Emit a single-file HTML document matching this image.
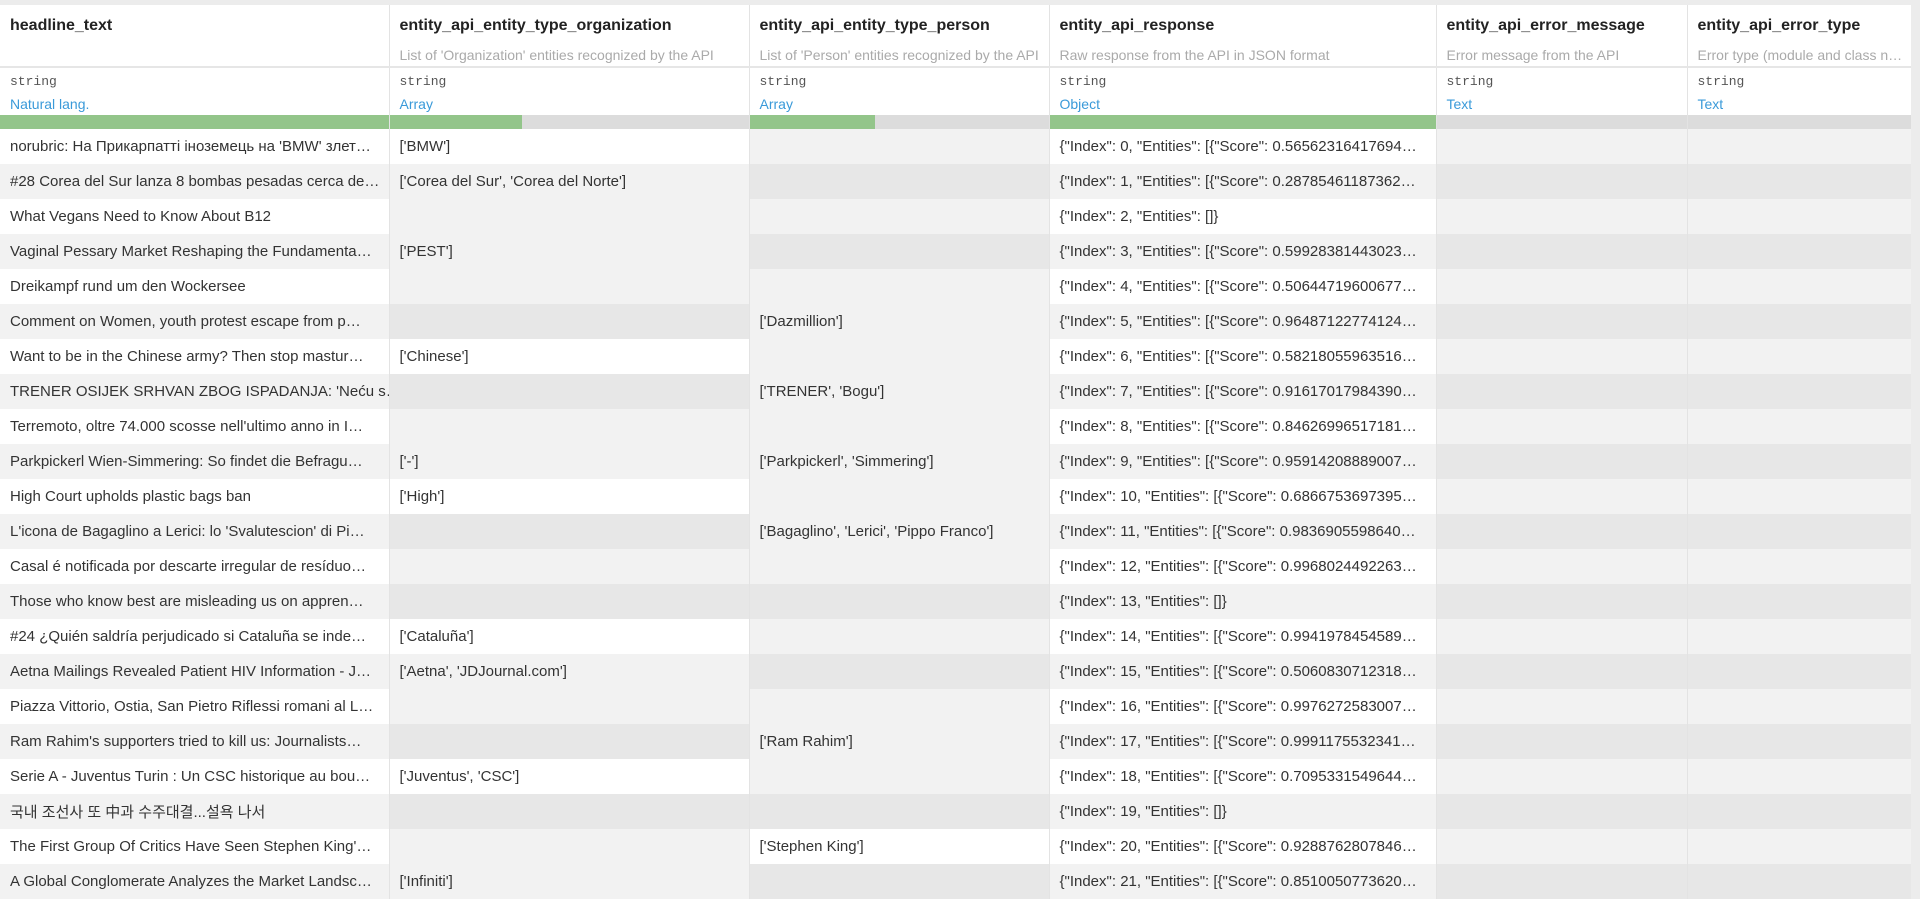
<!DOCTYPE html>
<html><head><meta charset="utf-8"><style>
*{box-sizing:border-box;margin:0;padding:0}
body{width:1920px;height:898px;overflow:hidden;background:#ececec;font-family:"Liberation Sans","Noto Sans CJK KR",sans-serif;color:#333}
table{position:absolute;left:0;top:5px;border-collapse:collapse;table-layout:fixed;width:1911px}
td{overflow:hidden;white-space:nowrap;text-overflow:clip;border-left:1px solid #e3e3e3;padding:0 0 0 10px;font-size:15px;color:#333}
td:first-child{border-left:none}
tr.h td{height:62px;background:#fff;vertical-align:top;border-bottom:2px solid #e6e6e6}
.n{font-weight:bold;font-size:16px;color:#222;margin-top:12px;height:20px}
.d{font-size:14px;color:#aaa;margin-top:10px;overflow:hidden}
tr.t td{height:48px;background:#fff;vertical-align:top}
.s{font-family:"Liberation Mono",monospace;font-size:13px;color:#555;margin-top:6px}
.m{font-size:14px;color:#3a9ad9;margin-top:7px}
tr.b td{height:14px;padding:0;background:#dcdcdc}
.g{height:14px;background:#93c58a}
tr.r td{height:35px}
tr.r:nth-child(even) td{background:#fff}
tr.r:nth-child(even) td.e{background:#f2f2f2}
tr.r:nth-child(odd) td{background:#f2f2f2}
tr.r:nth-child(odd) td.e{background:#e7e7e7}
</style></head><body>
<table>
<colgroup><col style="width:389px"><col style="width:360px"><col style="width:300px"><col style="width:387px"><col style="width:251px"><col style="width:224px"></colgroup>
<tr class="h"><td><div class="n">headline_text</div></td><td><div class="n">entity_api_entity_type_organization</div><div class="d">List of 'Organization' entities recognized by the API</div></td><td><div class="n">entity_api_entity_type_person</div><div class="d">List of 'Person' entities recognized by the API</div></td><td><div class="n">entity_api_response</div><div class="d">Raw response from the API in JSON format</div></td><td><div class="n">entity_api_error_message</div><div class="d">Error message from the API</div></td><td><div class="n">entity_api_error_type</div><div class="d">Error type (module and class n…</div></td></tr>
<tr class="t"><td><div class="s">string</div><div class="m">Natural lang.</div></td><td><div class="s">string</div><div class="m">Array</div></td><td><div class="s">string</div><div class="m">Array</div></td><td><div class="s">string</div><div class="m">Object</div></td><td><div class="s">string</div><div class="m">Text</div></td><td><div class="s">string</div><div class="m">Text</div></td></tr>
<tr class="b"><td><div class="g" style="width:100%"></div></td><td><div class="g" style="width:37%"></div></td><td><div class="g" style="width:42%"></div></td><td><div class="g" style="width:100%"></div></td><td></td><td></td></tr>
<tr class="r"><td>norubric: На Прикарпатті іноземець на 'BMW' злет…</td><td>['BMW']</td><td class="e"></td><td>{"Index": 0, "Entities": [{"Score": 0.56562316417694…</td><td class="e"></td><td class="e"></td></tr>
<tr class="r"><td>#28 Corea del Sur lanza 8 bombas pesadas cerca de…</td><td>['Corea del Sur', 'Corea del Norte']</td><td class="e"></td><td>{"Index": 1, "Entities": [{"Score": 0.28785461187362…</td><td class="e"></td><td class="e"></td></tr>
<tr class="r"><td>What Vegans Need to Know About B12</td><td class="e"></td><td class="e"></td><td>{"Index": 2, "Entities": []}</td><td class="e"></td><td class="e"></td></tr>
<tr class="r"><td>Vaginal Pessary Market Reshaping the Fundamenta…</td><td>['PEST']</td><td class="e"></td><td>{"Index": 3, "Entities": [{"Score": 0.59928381443023…</td><td class="e"></td><td class="e"></td></tr>
<tr class="r"><td>Dreikampf rund um den Wockersee</td><td class="e"></td><td class="e"></td><td>{"Index": 4, "Entities": [{"Score": 0.50644719600677…</td><td class="e"></td><td class="e"></td></tr>
<tr class="r"><td>Comment on Women, youth protest escape from p…</td><td class="e"></td><td>['Dazmillion']</td><td>{"Index": 5, "Entities": [{"Score": 0.96487122774124…</td><td class="e"></td><td class="e"></td></tr>
<tr class="r"><td>Want to be in the Chinese army? Then stop mastur…</td><td>['Chinese']</td><td class="e"></td><td>{"Index": 6, "Entities": [{"Score": 0.58218055963516…</td><td class="e"></td><td class="e"></td></tr>
<tr class="r"><td>TRENER OSIJEK SRHVAN ZBOG ISPADANJA: 'Neću s…</td><td class="e"></td><td>['TRENER', 'Bogu']</td><td>{"Index": 7, "Entities": [{"Score": 0.91617017984390…</td><td class="e"></td><td class="e"></td></tr>
<tr class="r"><td>Terremoto, oltre 74.000 scosse nell'ultimo anno in I…</td><td class="e"></td><td class="e"></td><td>{"Index": 8, "Entities": [{"Score": 0.84626996517181…</td><td class="e"></td><td class="e"></td></tr>
<tr class="r"><td>Parkpickerl Wien-Simmering: So findet die Befragu…</td><td>['-']</td><td>['Parkpickerl', 'Simmering']</td><td>{"Index": 9, "Entities": [{"Score": 0.95914208889007…</td><td class="e"></td><td class="e"></td></tr>
<tr class="r"><td>High Court upholds plastic bags ban</td><td>['High']</td><td class="e"></td><td>{"Index": 10, "Entities": [{"Score": 0.6866753697395…</td><td class="e"></td><td class="e"></td></tr>
<tr class="r"><td>L'icona de Bagaglino a Lerici: lo 'Svalutescion' di Pi…</td><td class="e"></td><td>['Bagaglino', 'Lerici', 'Pippo Franco']</td><td>{"Index": 11, "Entities": [{"Score": 0.9836905598640…</td><td class="e"></td><td class="e"></td></tr>
<tr class="r"><td>Casal é notificada por descarte irregular de resíduo…</td><td class="e"></td><td class="e"></td><td>{"Index": 12, "Entities": [{"Score": 0.9968024492263…</td><td class="e"></td><td class="e"></td></tr>
<tr class="r"><td>Those who know best are misleading us on appren…</td><td class="e"></td><td class="e"></td><td>{"Index": 13, "Entities": []}</td><td class="e"></td><td class="e"></td></tr>
<tr class="r"><td>#24 ¿Quién saldría perjudicado si Cataluña se inde…</td><td>['Cataluña']</td><td class="e"></td><td>{"Index": 14, "Entities": [{"Score": 0.9941978454589…</td><td class="e"></td><td class="e"></td></tr>
<tr class="r"><td>Aetna Mailings Revealed Patient HIV Information - J…</td><td>['Aetna', 'JDJournal.com']</td><td class="e"></td><td>{"Index": 15, "Entities": [{"Score": 0.5060830712318…</td><td class="e"></td><td class="e"></td></tr>
<tr class="r"><td>Piazza Vittorio, Ostia, San Pietro Riflessi romani al L…</td><td class="e"></td><td class="e"></td><td>{"Index": 16, "Entities": [{"Score": 0.9976272583007…</td><td class="e"></td><td class="e"></td></tr>
<tr class="r"><td>Ram Rahim's supporters tried to kill us: Journalists…</td><td class="e"></td><td>['Ram Rahim']</td><td>{"Index": 17, "Entities": [{"Score": 0.9991175532341…</td><td class="e"></td><td class="e"></td></tr>
<tr class="r"><td>Serie A - Juventus Turin : Un CSC historique au bou…</td><td>['Juventus', 'CSC']</td><td class="e"></td><td>{"Index": 18, "Entities": [{"Score": 0.7095331549644…</td><td class="e"></td><td class="e"></td></tr>
<tr class="r"><td>국내 조선사 또 中과 수주대결...설욕 나서</td><td class="e"></td><td class="e"></td><td>{"Index": 19, "Entities": []}</td><td class="e"></td><td class="e"></td></tr>
<tr class="r"><td>The First Group Of Critics Have Seen Stephen King'…</td><td class="e"></td><td>['Stephen King']</td><td>{"Index": 20, "Entities": [{"Score": 0.9288762807846…</td><td class="e"></td><td class="e"></td></tr>
<tr class="r"><td>A Global Conglomerate Analyzes the Market Landsc…</td><td>['Infiniti']</td><td class="e"></td><td>{"Index": 21, "Entities": [{"Score": 0.8510050773620…</td><td class="e"></td><td class="e"></td></tr>
</table>
</body></html>
